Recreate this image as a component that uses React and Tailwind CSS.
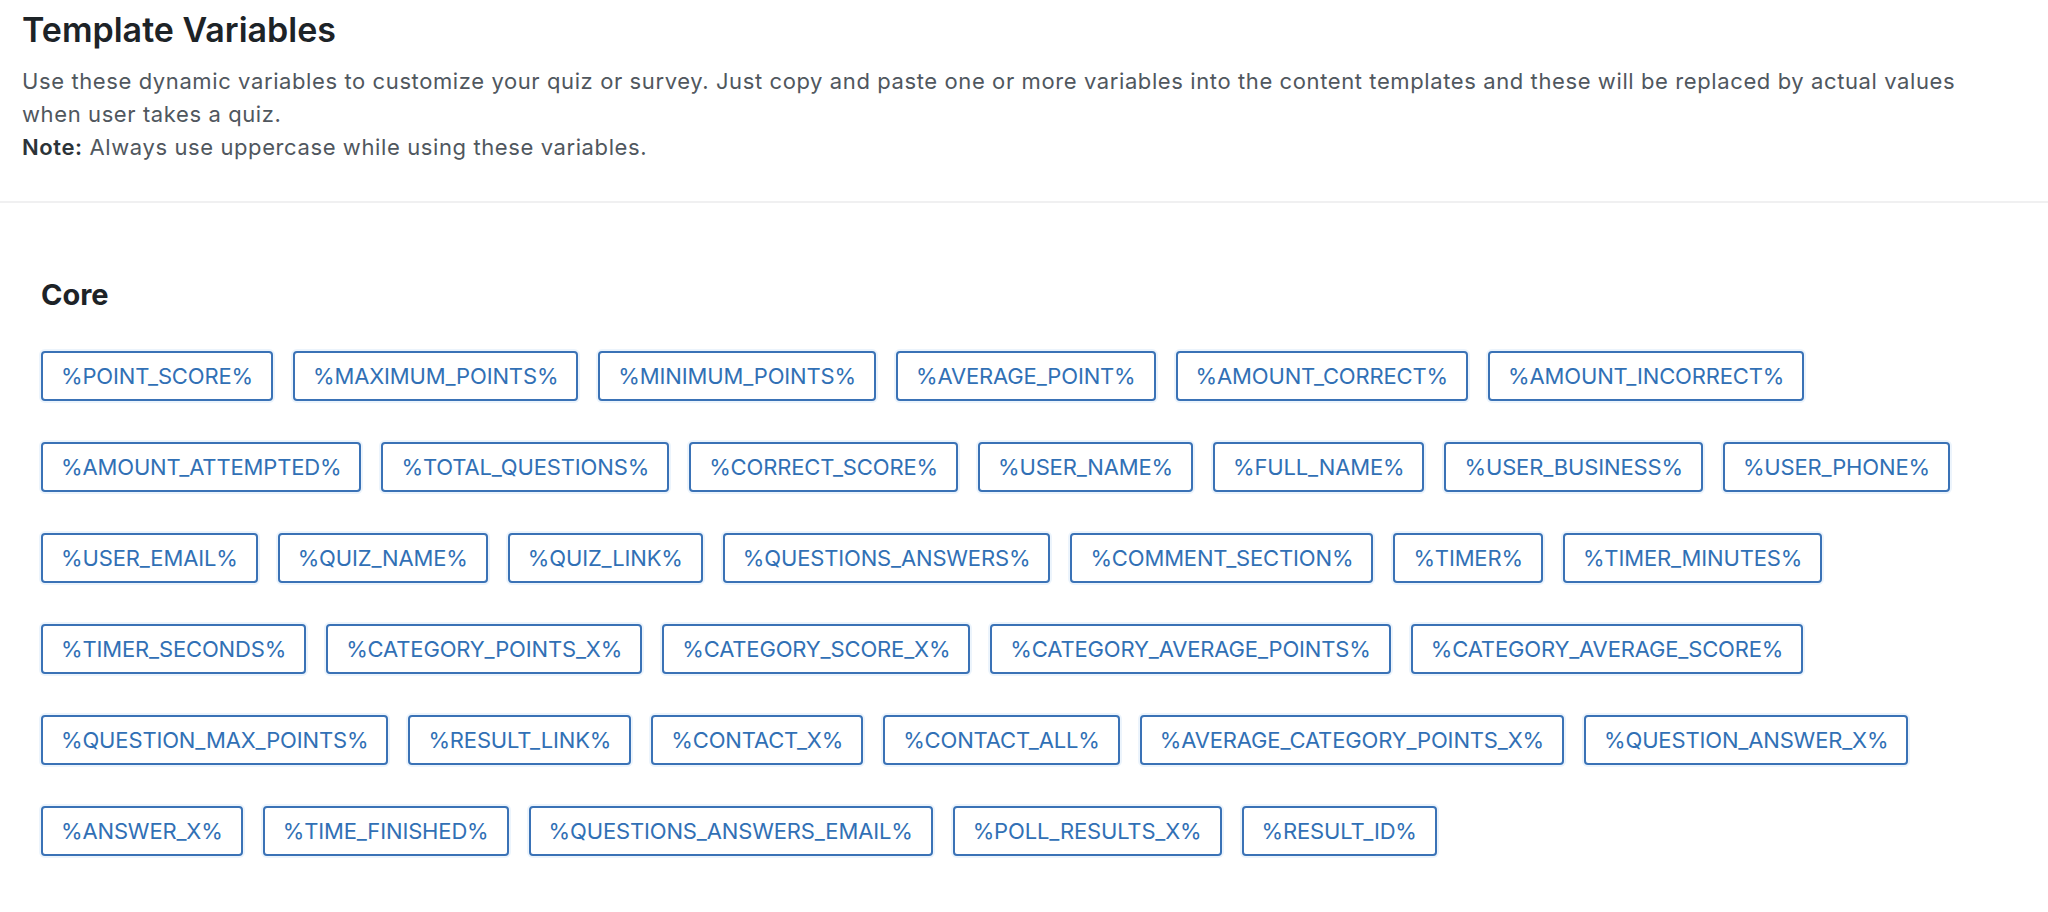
const rows = [
  ['%POINT_SCORE%', '%MAXIMUM_POINTS%', '%MINIMUM_POINTS%', '%AVERAGE_POINT%', '%AMOUNT_CORRECT%', '%AMOUNT_INCORRECT%'],
  ['%AMOUNT_ATTEMPTED%', '%TOTAL_QUESTIONS%', '%CORRECT_SCORE%', '%USER_NAME%', '%FULL_NAME%', '%USER_BUSINESS%', '%USER_PHONE%'],
  ['%USER_EMAIL%', '%QUIZ_NAME%', '%QUIZ_LINK%', '%QUESTIONS_ANSWERS%', '%COMMENT_SECTION%', '%TIMER%', '%TIMER_MINUTES%'],
  ['%TIMER_SECONDS%', '%CATEGORY_POINTS_X%', '%CATEGORY_SCORE_X%', '%CATEGORY_AVERAGE_POINTS%', '%CATEGORY_AVERAGE_SCORE%'],
  ['%QUESTION_MAX_POINTS%', '%RESULT_LINK%', '%CONTACT_X%', '%CONTACT_ALL%', '%AVERAGE_CATEGORY_POINTS_X%', '%QUESTION_ANSWER_X%'],
  ['%ANSWER_X%', '%TIME_FINISHED%', '%QUESTIONS_ANSWERS_EMAIL%', '%POLL_RESULTS_X%', '%RESULT_ID%'],
];

function VariableButton({ label }) {
  return (
    <button
      type="button"
      className="h-[50px] px-[18px] rounded-[4px] border-2 border-[#3a72b6] bg-white text-[#3170b5] text-[22px] leading-none tracking-[-0.15px] shadow-[0_0_0_2px_#ecf4fc] whitespace-nowrap"
    >
      {label}
    </button>
  );
}

export default function App() {
  return (
    <div className="min-h-screen bg-white font-['Inter','Noto_Sans',sans-serif] text-[#1d2327]">
      {/* Header */}
      <section className="pl-[22px] pr-[40px] pt-[10px] pb-[37px] border-b-2 border-[#f0f0f1]">
        <h2 className="text-[34px] leading-[40px] font-semibold text-[#1d2327]">Template Variables</h2>
        <p className="mt-[15px] text-[22px] leading-[33px] tracking-[0.6px] text-[#50575e]">
          Use these dynamic variables to customize your quiz or survey. Just copy and paste one or more variables into the content templates and these will be replaced by actual values when user takes a quiz.
        </p>
        <p className="text-[22px] leading-[33px] tracking-[0.6px] text-[#50575e]">
          <strong className="font-semibold text-[#2c3338]">Note:</strong> Always use uppercase while using these variables.
        </p>
      </section>

      {/* Core variables */}
      <section className="pl-[41px] pr-[40px] pt-[74px] pb-[40px]">
        <h3 className="text-[29px] leading-[36px] font-bold text-[#1d2327]">Core</h3>
        <div className="mt-[38px] flex flex-col gap-[41px]">
          {rows.map((row, i) => (
            <div key={i} className="flex gap-[20px]">
              {row.map((v) => (
                <VariableButton key={v} label={v} />
              ))}
            </div>
          ))}
        </div>
      </section>
    </div>
  );
}
